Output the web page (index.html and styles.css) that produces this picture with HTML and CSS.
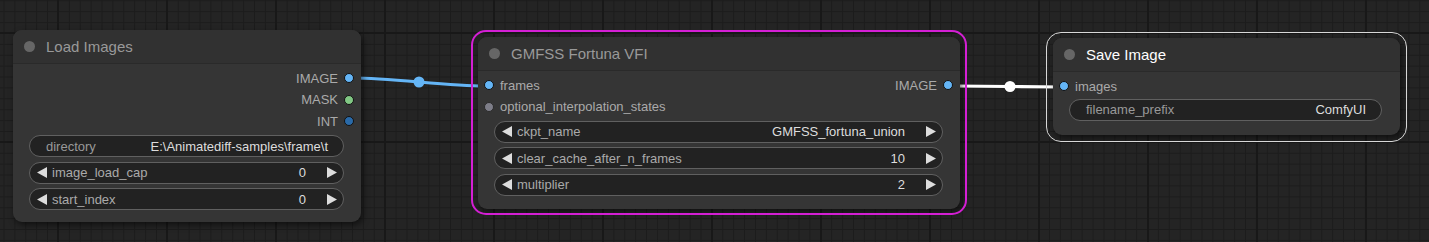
FILE: index.html
```html
<!DOCTYPE html>
<html>
<head>
<meta charset="utf-8">
<link rel="stylesheet" href="styles.css">
</head>
<body>
<div class="canvas">
  <svg class="links" width="1429" height="242" viewBox="0 0 1429 242">
    <path class="link blue" d="M 354 78 C 389 78, 449 86, 484 86"/>
    <circle class="mid blue-fill" cx="419" cy="82" r="5.5"/>
    <path class="link white" d="M 955 86 C 983 86, 1035 87, 1062 87"/>
    <circle class="mid white-fill" cx="1010" cy="86.5" r="5.5"/>
  </svg>

  <div class="node node-load">
    <div class="title"><span class="tdot"></span><span class="ttext">Load Images</span></div>
    <div class="body">
      <div class="slots">
        <div class="slot out"><span class="label">IMAGE</span><span class="dot c-image"></span></div>
        <div class="slot out"><span class="label">MASK</span><span class="dot c-mask"></span></div>
        <div class="slot out"><span class="label">INT</span><span class="dot c-int"></span></div>
      </div>
      <div class="widgets">
        <div class="widget text"><span class="wlabel">directory</span><span class="wvalue">E:\Animatediff-samples\frame\t</span></div>
        <div class="widget num">
          <svg class="arrow" width="10" height="11" viewBox="0 0 10 11"><polygon points="10,0 10,11 0,5.5"/></svg>
          <span class="wlabel">image_load_cap</span><span class="wvalue">0</span>
          <svg class="arrow" width="10" height="11" viewBox="0 0 10 11"><polygon points="0,0 0,11 10,5.5"/></svg>
        </div>
        <div class="widget num">
          <svg class="arrow" width="10" height="11" viewBox="0 0 10 11"><polygon points="10,0 10,11 0,5.5"/></svg>
          <span class="wlabel">start_index</span><span class="wvalue">0</span>
          <svg class="arrow" width="10" height="11" viewBox="0 0 10 11"><polygon points="0,0 0,11 10,5.5"/></svg>
        </div>
      </div>
    </div>
  </div>

  <div class="node node-vfi">
    <div class="outline magenta"></div>
    <div class="title"><span class="tdot"></span><span class="ttext">GMFSS Fortuna VFI</span></div>
    <div class="body">
      <div class="slots">
        <div class="slot both">
          <span class="in"><span class="dot c-image"></span><span class="label">frames</span></span>
          <span class="outp"><span class="label">IMAGE</span><span class="dot c-image"></span></span>
        </div>
        <div class="slot both">
          <span class="in"><span class="dot c-gray"></span><span class="label">optional_interpolation_states</span></span>
        </div>
      </div>
      <div class="widgets">
        <div class="widget num">
          <svg class="arrow" width="10" height="11" viewBox="0 0 10 11"><polygon points="10,0 10,11 0,5.5"/></svg>
          <span class="wlabel">ckpt_name</span><span class="wvalue">GMFSS_fortuna_union</span>
          <svg class="arrow" width="10" height="11" viewBox="0 0 10 11"><polygon points="0,0 0,11 10,5.5"/></svg>
        </div>
        <div class="widget num">
          <svg class="arrow" width="10" height="11" viewBox="0 0 10 11"><polygon points="10,0 10,11 0,5.5"/></svg>
          <span class="wlabel">clear_cache_after_n_frames</span><span class="wvalue">10</span>
          <svg class="arrow" width="10" height="11" viewBox="0 0 10 11"><polygon points="0,0 0,11 10,5.5"/></svg>
        </div>
        <div class="widget num">
          <svg class="arrow" width="10" height="11" viewBox="0 0 10 11"><polygon points="10,0 10,11 0,5.5"/></svg>
          <span class="wlabel">multiplier</span><span class="wvalue">2</span>
          <svg class="arrow" width="10" height="11" viewBox="0 0 10 11"><polygon points="0,0 0,11 10,5.5"/></svg>
        </div>
      </div>
    </div>
  </div>

  <div class="node node-save">
    <div class="outline white"></div>
    <div class="title"><span class="tdot"></span><span class="ttext selected">Save Image</span></div>
    <div class="body">
      <div class="slots">
        <div class="slot both">
          <span class="in"><span class="dot c-image"></span><span class="label">images</span></span>
        </div>
      </div>
      <div class="widgets">
        <div class="widget text"><span class="wlabel">filename_prefix</span><span class="wvalue">ComfyUI</span></div>
      </div>
    </div>
  </div>
</div>
</body>
</html>
```

FILE: styles.css
```css
html, body {
  margin: 0;
  padding: 0;
  background: #232323;
}

.canvas {
  position: relative;
  width: 1429px;
  height: 242px;
  overflow: hidden;
  font-family: "Liberation Sans", Arial, sans-serif;
  background-color: #242424;
  background-image:
    linear-gradient(to right, #181818 2px, transparent 2px),
    linear-gradient(to bottom, #181818 2px, transparent 2px),
    linear-gradient(to right, #1c1c1c 1px, transparent 1px),
    linear-gradient(to bottom, #1c1c1c 1px, transparent 1px);
  background-size: 109px 109px, 109px 109px, 10.9px 10.9px, 10.9px 10.9px;
  background-position: 57px 0, 0 32px, 3.5px 0, 0 0.3px;
}

.links {
  position: absolute;
  left: 0;
  top: 0;
  z-index: 0;
}

.link {
  fill: none;
  stroke-width: 3.2;
}
.link.blue { stroke: #64b5f6; }
.link.white { stroke: #ffffff; }
.blue-fill { fill: #64b5f6; }
.white-fill { fill: #ffffff; }

.node {
  position: absolute;
  z-index: 1;
  background: #353535;
  border-radius: 9px;
  box-shadow: 2px 3px 6px rgba(0, 0, 0, 0.55);
  display: flex;
  flex-direction: column;
  box-sizing: border-box;
}

.node-load { left: 13px; top: 30px; width: 348px; height: 192px; }
.node-vfi { left: 478px; top: 37px; width: 482px; height: 172px; }
.node-save { left: 1053px; top: 38px; width: 347px; height: 97px; }

.outline {
  position: absolute;
  left: -7px;
  top: -7px;
  right: -7px;
  bottom: -6px;
  border-radius: 15px;
  pointer-events: none;
}
.outline.magenta { border: 2px solid #d41fd4; }
.outline.white { border: 1.5px solid #d8d8d8; left: -7px; right: -7px; top: -6px; bottom: -7px; }

.title {
  height: 34px;
  flex: none;
  display: flex;
  align-items: center;
  background: #313131;
  border-radius: 9px 9px 0 0;
  border-bottom: 1px solid #2a2a2a;
  box-sizing: border-box;
  padding-left: 10.5px;
}

.tdot {
  width: 11px;
  height: 11px;
  border-radius: 50%;
  background: #666;
  margin-right: 11.5px;
}

.ttext {
  font-size: 15px;
  color: #999;
}
.ttext.selected { color: #fff; }

.body {
  display: flex;
  flex-direction: column;
  padding-top: 3.5px;
}

.slots {
  display: flex;
  flex-direction: column;
}

.slot {
  height: 21.5px;
  display: flex;
  align-items: center;
  font-size: 13px;
  color: #aaa;
}

.slot.out {
  justify-content: flex-end;
  padding-right: 7px;
}
.slot.out .label { margin-right: 6px; }

.slot.both {
  justify-content: space-between;
  padding-left: 6px;
  padding-right: 7px;
}
.slot .in, .slot .outp {
  display: flex;
  align-items: center;
}
.slot .in .label { margin-left: 6px; }
.slot .outp .label { margin-right: 6px; }

.dot {
  width: 8px;
  height: 8px;
  border-radius: 50%;
  border: 1px solid #111;
  flex: none;
}
.c-image { background: #64b5f6; }
.c-mask { background: #81c784; }
.c-int { background: #2a6aa8; }
.c-gray { background: #7d7d88; border-color: #2a2a2a; }

.widgets {
  display: flex;
  flex-direction: column;
  gap: 4.5px;
  padding: 0 17px 0 16px;
  margin-top: 3px;
}
.node-save .widgets { margin-top: 1.5px; padding-right: 18px; }

.widget {
  height: 22px;
  box-sizing: border-box;
  border: 1px solid #606060;
  background: #222;
  border-radius: 11px;
  display: flex;
  align-items: center;
  font-size: 13px;
}

.widget.text {
  padding: 0 15px 0 16px;
}
.widget.text .wlabel { color: #999; flex: 1; }
.widget.text .wvalue { color: #ddd; }

.widget.num {
  padding: 0 6px 0 7px;
}
.widget.num .wlabel { color: #aaa; flex: 1; margin-left: 5px; }
.widget.num .wvalue { color: #ddd; margin-right: 21px; }

.arrow {
  flex: none;
  fill: #ddd;
}
```
